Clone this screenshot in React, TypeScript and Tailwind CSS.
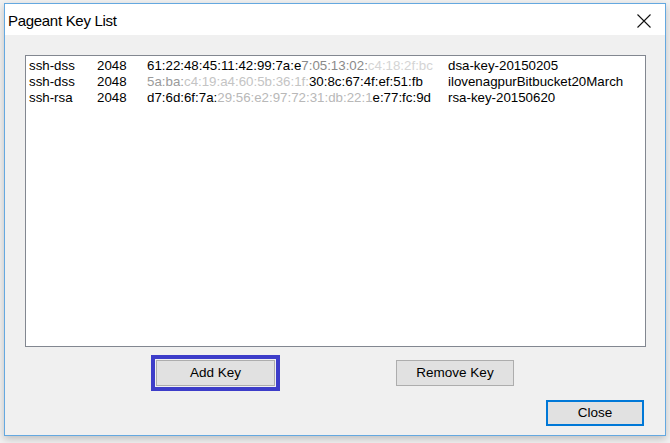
import React from "react";

const font = { fontFamily: '"Liberation Sans", Arial, sans-serif' };

type Seg = { t: string; c?: string };

const rows: { type: string; bits: string; fp: Seg[]; name: string }[] = [
  {
    type: "ssh-dss",
    bits: "2048",
    fp: [
      { t: "61:22:48:45:11:42:99:7a:e" },
      { t: "7:05:13:02:", c: "text-[#8a8a8a]" },
      { t: "c4:18:2f:bc", c: "text-[#d4d4d4]" },
    ],
    name: "dsa-key-20150205",
  },
  {
    type: "ssh-dss",
    bits: "2048",
    fp: [
      { t: "5a:ba:", c: "text-[#9a9a9a]" },
      { t: "c4:19:a4:60:5b:36:1f:", c: "text-[#c4c4c4]" },
      { t: "30:8c:67:4f:ef:51:fb" },
    ],
    name: "ilovenagpurBitbucket20March",
  },
  {
    type: "ssh-rsa",
    bits: "2048",
    fp: [
      { t: "d7:6d:6f:7a:" },
      { t: "29:56:e2:97:72:31:db:22:1", c: "text-[#b8b8b8]" },
      { t: "e:77:fc:9d" },
    ],
    name: "rsa-key-20150620",
  },
];

export default function App() {
  return (
    <div
      className="w-[670px] h-[443px] bg-[#f2f2f2] overflow-hidden pt-[3px] pl-[4px] text-black"
      style={font}
    >
      <div className="w-[662px] h-[433px] border border-[#64a8e0] bg-[#f0f0f0] flex flex-col shadow-[0_3px_8px_rgba(0,0,0,0.22)]">
        {/* title bar */}
        <div className="h-[31px] bg-white flex items-center justify-between shrink-0">
          <span className="pl-[3px] pt-[1px] text-[15px] tracking-[-0.3px] leading-none">
            Pageant Key List
          </span>
          <svg
            width="14"
            height="14"
            viewBox="0 0 14 14"
            className="mr-[14px] mt-[2px]"
          >
            <path d="M0.5 0.5 L13.5 13.5 M13.5 0.5 L0.5 13.5" stroke="#111" strokeWidth="1.1" />
          </svg>
        </div>
        {/* client area */}
        <div className="flex-1 flex flex-col pl-[20px] pt-[20px]">
          <div className="w-[621px] h-[292px] border border-[#828790] bg-white pt-[2px] pl-[3px] text-[13.3px] leading-[16px]">
            {rows.map((r, i) => (
              <div key={i} className="flex whitespace-nowrap">
                <span className="w-[68px]">{r.type}</span>
                <span className="w-[50px]">{r.bits}</span>
                <span className="w-[301px]">
                  {r.fp.map((s, j) => (
                    <span key={j} className={s.c}>
                      {s.t}
                    </span>
                  ))}
                </span>
                <span>{r.name}</span>
              </div>
            ))}
          </div>
          <div className="flex items-start mt-[8px] ml-[126px] text-[13.5px]">
            <div className="border-4 border-[#3d3dc9] p-px">
              <button className="w-[119px] h-[26px] bg-[#e1e1e1] border border-[#adadad] flex items-center justify-center">
                Add Key
              </button>
            </div>
            <button className="ml-[116px] mt-[5px] w-[118px] h-[26px] bg-[#e1e1e1] border border-[#adadad] flex items-center justify-center">
              Remove Key
            </button>
          </div>
          <div className="flex mt-[9px] ml-[521px] text-[13.5px]">
            <button className="w-[98px] h-[26px] bg-[#e1e1e1] border-2 border-[#0078d7] flex items-center justify-center">
              Close
            </button>
          </div>
        </div>
      </div>
    </div>
  );
}
